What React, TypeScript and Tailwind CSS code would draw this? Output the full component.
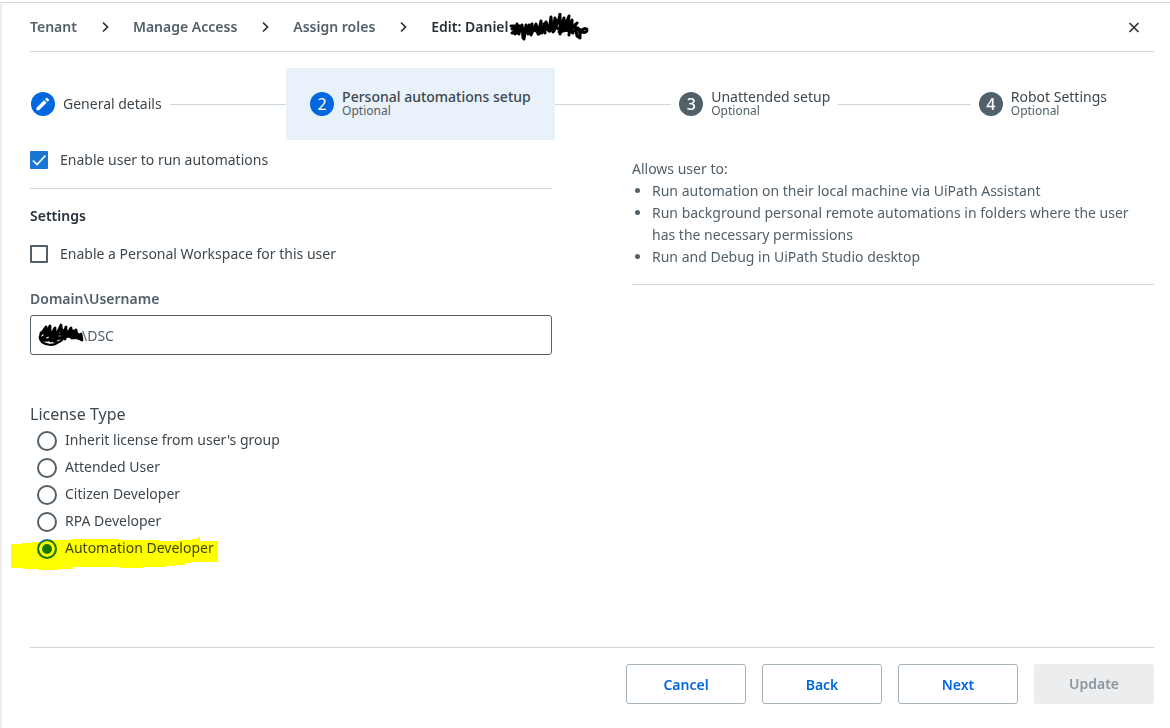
import { useState } from 'react'

const BREADCRUMBS = ['Tenant', 'Manage Access', 'Assign roles']

const LICENSE_TYPES = [
  "Inherit license from user's group",
  'Attended User',
  'Citizen Developer',
  'RPA Developer',
  'Automation Developer',
]

function ChevronRight() {
  return (
    <svg viewBox="0 0 24 24" className="mx-4 h-6 w-6 shrink-0" aria-hidden="true">
      <path d="M10 7.500l4.500 4.500-4.500 4.500" fill="none" stroke="#273139" strokeWidth="1.7" />
    </svg>
  )
}

function NameScribble() {
  return (
    <svg viewBox="0 0 80 28" className="h-7 w-20 shrink-0" aria-hidden="true">
      <g fill="none" stroke="#000" strokeWidth="3" strokeLinecap="round" strokeLinejoin="round">
        <path d="M2 13h9l-7 3 9 0-10 4 9-3-6 4 8-4 1 9 2-14 2 9 4-10-1 11 5-11 2 10 3-13 1 12 4-11 3 9 2-14 1 12 4-9-2 11 5-12 1-5 0 15 4-11 0 11 5-13-2 14 5-10 0 9 5-6" />
        <path d="M3 16l8-2 6 3 7-2 5 3 7-3 5 3 6-4 5 4 6-2 5 3 6-3 5 2M19 19l6-2 6 3 6-4M50 19l8-2 6 3" />
        <path d="M8 11l2 10M13 12l1 13M20 12l-1 8M28 14l2 7M35 11l1 9M46 5l-2 14M55 7l-4 14M61 10l-1 12M66 12l2 11 3 2 0-8" />
        <path d="M73 18c0-3 5-3 5-1s-2 3-5 2M71 20l-2-5" />
      </g>
    </svg>
  )
}

function DomainScribble() {
  return (
    <svg
      viewBox="0 0 46 26"
      className="pointer-events-none absolute top-1.5 left-2 h-[26px] w-[46px]"
      aria-hidden="true"
    >
      <g fill="none" stroke="#000" strokeLinecap="round" strokeLinejoin="round">
        <path
          strokeWidth="2.800"
          d="M3 13l5-7-1 9 5-10 0 11 5-9 0 10 6-13 1 12 4-10 0 10 5-9 1 10 4-8 1 8 4-4 1 6-4-2"
        />
        <path
          strokeWidth="2.800"
          d="M3 12l7-1 7 1 7-3 6 2 6-1 5 4-6 2-6-1-6 2-7-1-7 3-6-2 8-3 8 0 8-2 8 2M7 13l0 6M12 12l1 8M26 10l1 8M29 15l7 2 6-2"
        />
        <path strokeWidth="2.200" d="M3 13c-2 3-1 6 1 8 4 3 11 4 15 1 3-2 6-2 6-5M4 19c6 1 14 0 19-2M14 18c1 4 5 3 5-1" />
      </g>
    </svg>
  )
}

function Step({ index, title, optional, active, done }: {
  index: number
  title: string
  optional?: boolean
  active?: boolean
  done?: boolean
}) {
  return (
    <li
      aria-current={active ? 'step' : undefined}
      className={
        active
          ? 'z-10 -mx-4 flex h-[72px] shrink-0 items-center gap-2 bg-[#e9f1fa] px-6'
          : 'flex h-[72px] shrink-0 items-center gap-2 px-2'
      }
    >
      <span
        className={
          active || done
            ? 'flex h-6 w-6 items-center justify-center rounded-full bg-[#0067df] text-base leading-6 text-white'
            : 'flex h-6 w-6 items-center justify-center rounded-full bg-[#526069] text-base leading-6 font-medium text-white'
        }
      >
        {done ? (
          <svg viewBox="0 0 24 24" className="h-6 w-6" fill="#fff" aria-hidden="true">
            <path d="M5.500 15.700V18.300H8L15.600 10.800 13.100 8.200zM14 7.300l2.500 2.500 1.400-1.300a.8.8 0 0 0 0-1.100l-1.400-1.400a.8.8 0 0 0-1.100 0z" />
          </svg>
        ) : (
          index
        )}
      </span>
      <span className="flex flex-col">
        <span
          className={
            active
              ? 'text-sm leading-[14px] font-medium text-[#3d474f]'
              : 'text-sm leading-[14px] text-[#3d474f]'
          }
        >
          {title}
        </span>
        {optional && <span className="text-xs leading-[14px] text-[#526069]">Optional</span>}
      </span>
    </li>
  )
}

function Connector() {
  return <li aria-hidden="true" className="h-px flex-1 bg-[#cfd8dd]" />
}

function Checkbox({ label, defaultChecked }: { label: string; defaultChecked?: boolean }) {
  return (
    <label className="flex h-10 items-center gap-3 text-[#3d474f]">
      <span className="grid h-[18px] w-[18px]">
        <input
          type="checkbox"
          defaultChecked={defaultChecked}
          className="peer col-start-1 row-start-1 h-[18px] w-[18px] appearance-none rounded-[1px] border-2 border-[#526069] checked:border-[#1976d2] checked:bg-[#1976d2]"
        />
        <svg
          viewBox="0 0 18 18"
          className="pointer-events-none invisible col-start-1 row-start-1 h-[18px] w-[18px] peer-checked:visible"
          aria-hidden="true"
        >
          <path d="M3 9.500l4 4 8.500-9" fill="none" stroke="#fff" strokeWidth="1.7" />
        </svg>
      </span>
      {label}
    </label>
  )
}

export default function App() {
  const [license, setLicense] = useState('Automation Developer')
  const [username, setUsername] = useState('\\DSC')

  return (
    <div className="min-h-screen bg-white pt-0.5 font-['Noto_Sans',sans-serif] text-sm text-[#273139]">
      <div className="flex min-h-[calc(100vh-2px)] flex-col border-t border-l-2 border-t-[#cfd8dd] border-l-[#ececec] pr-4 pl-7">
        <header className="flex h-[49px] items-center justify-between border-b border-[#cfd8dd]">
          <nav aria-label="Breadcrumb" className="flex items-center font-semibold">
            {BREADCRUMBS.map((crumb) => (
              <span key={crumb} className="flex items-center">
                <a href="#" className="text-[#526069]">
                  {crumb}
                </a>
                <ChevronRight />
              </span>
            ))}
            <span>Edit: Daniel</span>
            <NameScribble />
          </nav>
          <button type="button" aria-label="Close" className="flex h-10 w-10 items-center justify-center">
            <svg viewBox="0 0 20 20" className="h-5 w-5" aria-hidden="true">
              <path d="M5.500 6l9 9M14.500 6l-9 9" stroke="#273139" strokeWidth="1.600" />
            </svg>
          </button>
        </header>

        <ol className="-ml-2 mt-4 flex items-center pr-[39px] pl-px">
          <Step index={1} title="General details" done />
          <Connector />
          <Step index={2} title="Personal automations setup" optional active />
          <Connector />
          <Step index={3} title="Unattended setup" optional />
          <Connector />
          <Step index={4} title="Robot Settings" optional />
        </ol>

        <main className="grid flex-1 grid-cols-2 items-start gap-20">
          <section>
            <Checkbox label="Enable user to run automations" defaultChecked />
            <hr className="mt-2 border-[#cfd8dd]" />
            <h2 className="mt-4 leading-[22px] font-semibold">Settings</h2>
            <div className="mt-[7px]">
              <Checkbox label="Enable a Personal Workspace for this user" />
            </div>

            <label htmlFor="username" className="mt-3.5 block leading-[22px] font-semibold text-[#526069]">
              Domain\Username
            </label>
            <div className="relative mt-[5px]">
              <input
                id="username"
                type="text"
                value={username}
                onChange={(e) => setUsername(e.target.value)}
                className="block h-10 w-full rounded-[3px] border border-[#526069] pr-2 pl-[51px] text-[#526069]"
              />
              <DomainScribble />
            </div>

            <fieldset className="relative mt-[47px]">
              <legend className="text-base leading-6 text-[#3d474f]">License Type</legend>
              <div className="mt-px pl-[7px]">
                {LICENSE_TYPES.map((type) => (
                  <label key={type} className="flex h-[27px] items-center gap-2 text-[#3d474f]">
                    <input
                      type="radio"
                      name="license"
                      checked={license === type}
                      onChange={() => setLicense(type)}
                      className="h-5 w-5 appearance-none rounded-full border-2 border-[#526069] checked:border-[#1976d2] checked:bg-[#1976d2] checked:shadow-[inset_0_0_0_3px_#fff]"
                    />
                    <span className="pb-0.5">{type}</span>
                  </label>
                ))}
              </div>
              {/* marker pen stroke over the last option */}
              <svg
                viewBox="0 0 207 34"
                className="pointer-events-none absolute -bottom-[9px] -left-[19px] h-[34px] w-[207px] mix-blend-multiply"
                aria-hidden="true"
              >
                <path
                  fill="#ff0"
                  d="M0 7H11V6H21V5H32V3H60V2H108V3H148V4H169V3H180V2H186V0H189V4H207V25H181V26H174V28H164V29H154V30H132V31H108V30H62V32H48V33H27V32H12V31H0Z"
                />
              </svg>
            </fieldset>
          </section>

          <section className="border-b border-[#cfd8dd] pt-[18px] pb-4 leading-[22px] text-[#526069]">
            <p>Allows user to:</p>
            <ul className="list-disc pl-5">
              <li>Run automation on their local machine via UiPath Assistant</li>
              <li>Run background personal remote automations in folders where the user has the necessary permissions</li>
              <li>Run and Debug in UiPath Studio desktop</li>
            </ul>
          </section>
        </main>

        <footer className="flex justify-end gap-4 border-t border-[#cfd8dd] pt-4 pb-6 font-semibold">
          {['Cancel', 'Back', 'Next'].map((name) => (
            <button
              key={name}
              type="button"
              className="h-10 w-[120px] rounded-[3px] border border-[#a4b1b8] pt-0.5 text-[#0067df]"
            >
              {name}
            </button>
          ))}
          <button type="button" disabled className="h-10 w-[120px] rounded-[3px] bg-[#ecedee] text-[#8a97a0]">
            Update
          </button>
        </footer>
      </div>
    </div>
  )
}
